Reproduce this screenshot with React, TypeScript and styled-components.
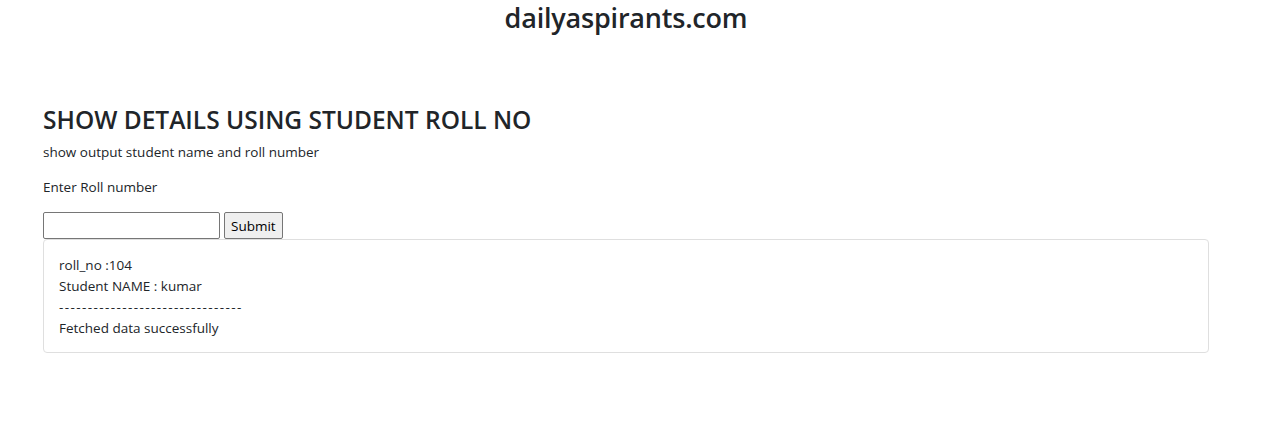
import styled, { createGlobalStyle } from 'styled-components';

const GlobalStyle = createGlobalStyle`
  * { box-sizing: border-box; }
  body {
    margin: 0;
    background: #fff;
    color: #212529;
    font-family: 'Open Sans', 'Noto Sans', sans-serif;
    font-size: 14px;
    line-height: 1.5;
  }
`;

const SiteTitle = styled.h3`
  margin: 0;
  padding: 0 22px 0 0;
  text-align: center;
  font-size: 27px;
  font-weight: 600;
  line-height: 36px;
  letter-spacing: -0.2px;
`;

const Main = styled.main`
  padding: 66px 65px 0 43px;
`;

const Heading = styled.h4`
  margin: 0 0 4px;
  font-size: 24.5px;
  font-weight: 600;
  line-height: 36px;
`;

const Note = styled.p`
  margin: 0 0 14px;
  font-size: 13.5px;
  line-height: 21px;
`;

const Label = styled.label`
  display: block;
  margin-bottom: 14px;
  font-size: 13.5px;
  line-height: 21px;
`;

const Form = styled.form`
  display: flex;
  align-items: flex-end;
  gap: 4px;
`;

const Input = styled.input`
  width: 177px;
  height: 27px;
  border: 1px solid #767676;
  border-radius: 2px;
  padding: 1px 2px;
  font: inherit;
`;

const Button = styled.button`
  height: 27px;
  padding: 0 6px;
  border: 1px solid #767676;
  border-radius: 2px;
  background: #efefef;
  color: #000;
  font-family: 'Open Sans', sans-serif;
  font-size: 13.5px;
`;

const Card = styled.div`
  border: 1px solid #dfdfdf;
  border-radius: 4px;
  padding: 15px 15px 13px;
  font-size: 13.5px;
  line-height: 21px;
`;

const Line = styled.div<{ $dashed?: boolean }>`
  letter-spacing: ${(p) => (p.$dashed ? '1.4px' : 'normal')};
`;

export default function App() {
  return (
    <>
      <GlobalStyle />
      <SiteTitle>dailyaspirants.com</SiteTitle>
      <Main>
        <Heading>SHOW DETAILS USING STUDENT ROLL NO</Heading>
        <Note>show output student name and roll number</Note>
        <Label htmlFor="roll">Enter Roll number</Label>
        <Form onSubmit={(e) => e.preventDefault()}>
          <Input id="roll" type="text" />
          <Button type="submit">Submit</Button>
        </Form>
        <Card>
          <Line>roll_no :104</Line>
          <Line>Student NAME : kumar</Line>
          <Line $dashed>--------------------------------</Line>
          <Line>Fetched data successfully</Line>
        </Card>
      </Main>
    </>
  );
}
